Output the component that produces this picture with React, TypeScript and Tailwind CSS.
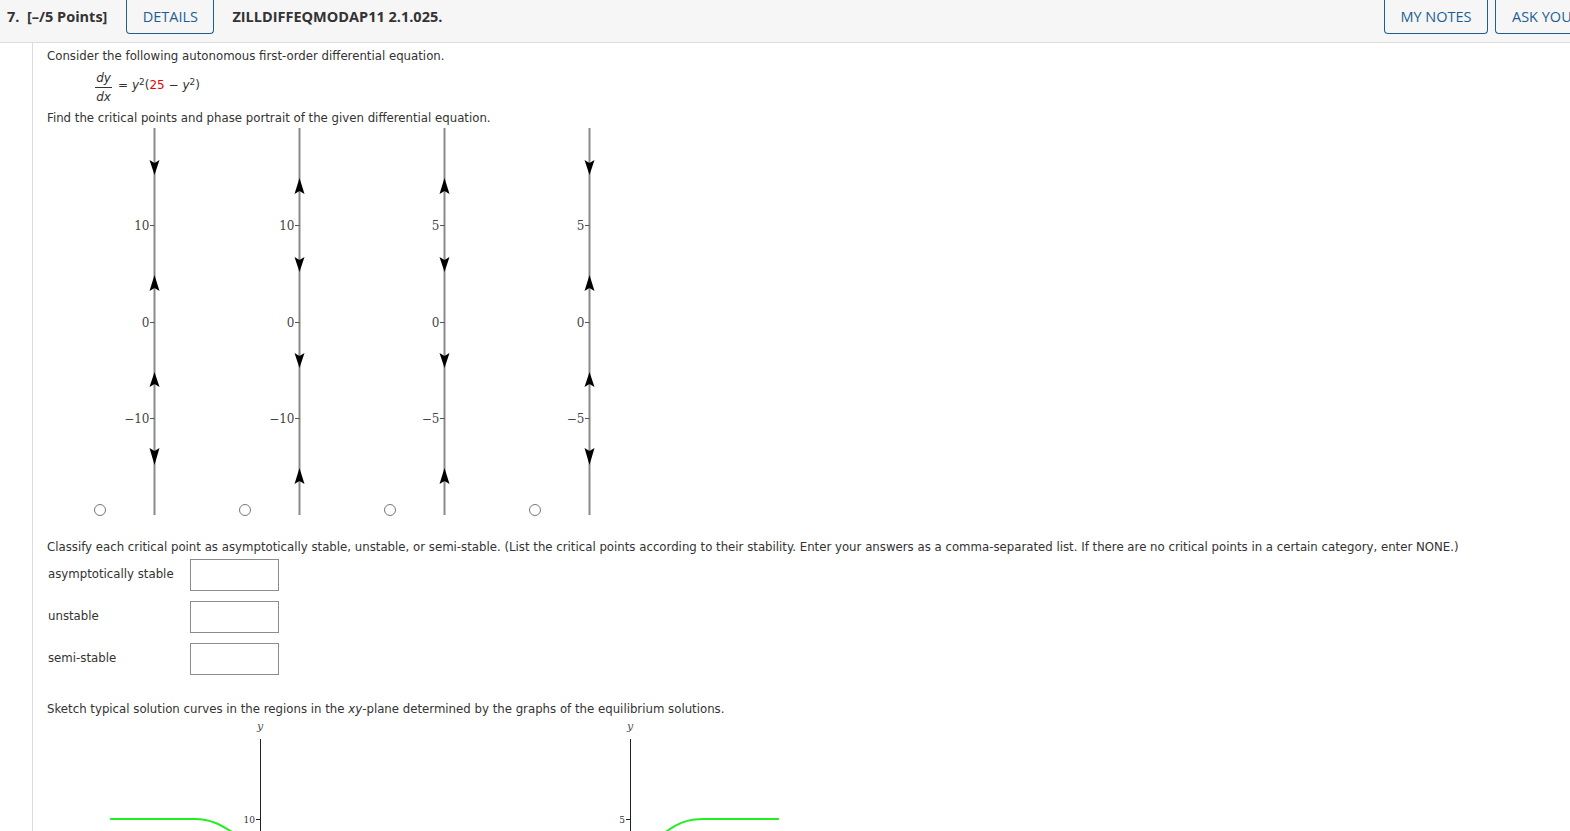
import React from "react";

type Arrow = { dir: "up" | "down"; top: number; bottom: number };

const portraits: { labels: string[]; arrows: Arrow[] }[] = [
  {
    labels: ["10", "0", "\u221210"],
    arrows: [
      { dir: "down", top: 32, bottom: 47 },
      { dir: "up", top: 147, bottom: 163 },
      { dir: "up", top: 244, bottom: 259 },
      { dir: "down", top: 320, bottom: 337 },
    ],
  },
  {
    labels: ["10", "0", "\u221210"],
    arrows: [
      { dir: "up", top: 50, bottom: 66 },
      { dir: "down", top: 129, bottom: 144 },
      { dir: "down", top: 225, bottom: 240 },
      { dir: "up", top: 340, bottom: 356 },
    ],
  },
  {
    labels: ["5", "0", "\u22125"],
    arrows: [
      { dir: "up", top: 50, bottom: 66 },
      { dir: "down", top: 129, bottom: 144 },
      { dir: "down", top: 225, bottom: 240 },
      { dir: "up", top: 340, bottom: 356 },
    ],
  },
  {
    labels: ["5", "0", "\u22125"],
    arrows: [
      { dir: "down", top: 32, bottom: 47 },
      { dir: "up", top: 147, bottom: 163 },
      { dir: "up", top: 244, bottom: 259 },
      { dir: "down", top: 320, bottom: 337 },
    ],
  },
];

function Portrait({ labels, arrows }: { labels: string[]; arrows: Arrow[] }) {
  const lx = 48.5;
  const ticks = [97, 194, 290];
  return (
    <svg width="133" height="387" viewBox="0 0 133 387" className="block shrink-0">
      <line x1={lx} y1="0" x2={lx} y2="387" stroke="#8a8a8a" strokeWidth="2" />
      {ticks.map((t, i) => (
        <g key={i}>
          <line x1={lx - 4.5} y1={t + 0.5} x2={lx} y2={t + 0.5} stroke="#555" strokeWidth="1" />
          <text
            x={lx - 5}
            y={t + 4.5}
            textAnchor="end"
            fontSize="12"
            fill="#444"
            fontFamily="'DejaVu Serif', serif"
          >
            {labels[i]}
          </text>
        </g>
      ))}
      {arrows.map((a, i) => {
        const pts =
          a.dir === "down"
            ? `${lx - 5},${a.top} ${lx},${a.top + 3} ${lx + 5},${a.top} ${lx},${a.bottom}`
            : `${lx - 5},${a.bottom} ${lx},${a.bottom - 3} ${lx + 5},${a.bottom} ${lx},${a.top}`;
        return <polygon key={i} points={pts} fill="#000" />;
      })}
    </svg>
  );
}

function Radio() {
  return <span className="mb-[-1px] block h-[12px] w-[12px] shrink-0 rounded-full border border-[#777] bg-white" />;
}

function InputRow({ label }: { label: string }) {
  return (
    <div className="flex h-[32px] items-center">
      <span className="w-[143px] pl-[1px]">{label}</span>
      <span className="block h-[32px] w-[89px] border border-[#8c8c8c] bg-white" />
    </div>
  );
}

export default function App() {
  return (
    <div
      className="h-[831px] w-[1570px] overflow-hidden bg-white text-[#333]"
      style={{ fontFamily: "'DejaVu Sans', Verdana, sans-serif" }}
    >
      {/* Header */}
      <div
        className="flex h-[43px] items-start border-b border-[#dcdcdc] bg-[#f6f6f6]"
        style={{ fontFamily: "'Open Sans', sans-serif" }}
      >
        <div className="whitespace-nowrap pl-[7px] pt-[6px] text-[14.5px] font-bold text-[#333]">
          7.&nbsp;&nbsp;[–/5 Points]
        </div>
        <div className="ml-[19px] flex h-[34px] w-[88px] items-center justify-center rounded-b-[4px] border border-t-0 border-[#1d5f94] text-[14.5px] text-[#1d5f94]">
          DETAILS
        </div>
        <div className="ml-[18px] whitespace-nowrap pt-[6px] text-[14.5px] font-bold text-[#333]">
          ZILLDIFFEQMODAP11 2.1.025.
        </div>
        <div className="flex-1" />
        <div className="flex h-[34px] w-[104px] shrink-0 items-center justify-center rounded-b-[4px] border border-t-0 border-[#1d5f94] text-[14.5px] text-[#1d5f94]">
          MY NOTES
        </div>
        <div className="ml-[7px] flex h-[34px] w-[75px] shrink-0 items-center justify-start overflow-hidden whitespace-nowrap rounded-bl-[4px] border border-r-0 border-t-0 border-[#1d5f94] pl-[16px] text-[14.5px] text-[#1d5f94]">
          ASK YOUR TEACHER
        </div>
      </div>

      {/* Body */}
      <div className="ml-[32px] h-[788px] border-l border-[#dcdcdc] pl-[14px] text-[11.75px]">
        <div className="pt-[5px] leading-[16px]">Consider the following autonomous first-order differential equation.</div>

        <div className="ml-[48px] mt-[6px] flex items-start">
          <div className="flex flex-col items-center text-[12px]">
            <span className="px-[1px] italic leading-[16px]">dy</span>
            <span className="mt-[1px] block h-[1px] w-[17px] bg-[#333]" />
            <span className="mt-[1px] px-[1px] italic leading-[16px]">dx</span>
          </div>
          <div className="ml-[6px] mt-[7px] whitespace-pre text-[12px] leading-[16px]">
            {"= "}
            <span className="italic">y</span>
            <sup className="text-[9px]">2</sup>
            {"("}
            <span className="text-[#e00]">25</span>
            {" \u2212 "}
            <span className="italic">y</span>
            <sup className="text-[9px]">2</sup>
            {")"}
          </div>
        </div>

        <div className="mt-[5px] leading-[16px]">Find the critical points and phase portrait of the given differential equation.</div>

        <div className="mt-[2px] flex pl-[47px]">
          {portraits.map((p, i) => (
            <div key={i} className="flex w-[145px] shrink-0 items-end">
              <Radio />
              <Portrait labels={p.labels} arrows={p.arrows} />
            </div>
          ))}
        </div>

        <div className="mt-[24px] whitespace-nowrap leading-[16px]">
          Classify each critical point as asymptotically stable, unstable, or semi-stable. (List the critical points according to their stability. Enter your answers as a comma-separated list. If there are no critical points in a certain category, enter NONE.)
        </div>

        <div className="mt-[4px] flex flex-col gap-[10px]">
          <InputRow label="asymptotically stable" />
          <InputRow label="unstable" />
          <InputRow label="semi-stable" />
        </div>

        <div className="mt-[26px] leading-[16px]">
          Sketch typical solution curves in the regions in the <span className="italic">xy</span>-plane determined by the graphs of the equilibrium solutions.
        </div>

        <div className="mt-[2px] flex pl-[28px]">
          <svg width="370" height="120" viewBox="0 0 370 120" className="block shrink-0">
            <text x="185" y="11" textAnchor="middle" fontSize="11" fontStyle="italic" fill="#555" fontFamily="'DejaVu Serif', serif">y</text>
            <line x1="185.5" y1="20" x2="185.5" y2="120" stroke="#222" strokeWidth="1" />
            <line x1="181" y1="100.5" x2="185" y2="100.5" stroke="#222" strokeWidth="1" />
            <text x="180" y="104" textAnchor="end" fontSize="9" fill="#333" fontFamily="'DejaVu Serif', serif">10</text>
            <path d="M35 100 L120 100 C135 100 145 105 160 115" fill="none" stroke="#22ee22" strokeWidth="2" />
          </svg>
          <svg width="370" height="120" viewBox="0 0 370 120" className="block shrink-0">
            <text x="185" y="11" textAnchor="middle" fontSize="11" fontStyle="italic" fill="#555" fontFamily="'DejaVu Serif', serif">y</text>
            <line x1="185.5" y1="20" x2="185.5" y2="120" stroke="#222" strokeWidth="1" />
            <line x1="181" y1="100.5" x2="185" y2="100.5" stroke="#222" strokeWidth="1" />
            <text x="180" y="104" textAnchor="end" fontSize="9" fill="#333" fontFamily="'DejaVu Serif', serif">5</text>
            <path d="M218 115 C232 104 242 100 260 100 L334 100" fill="none" stroke="#22ee22" strokeWidth="2" />
          </svg>
        </div>
      </div>
    </div>
  );
}
